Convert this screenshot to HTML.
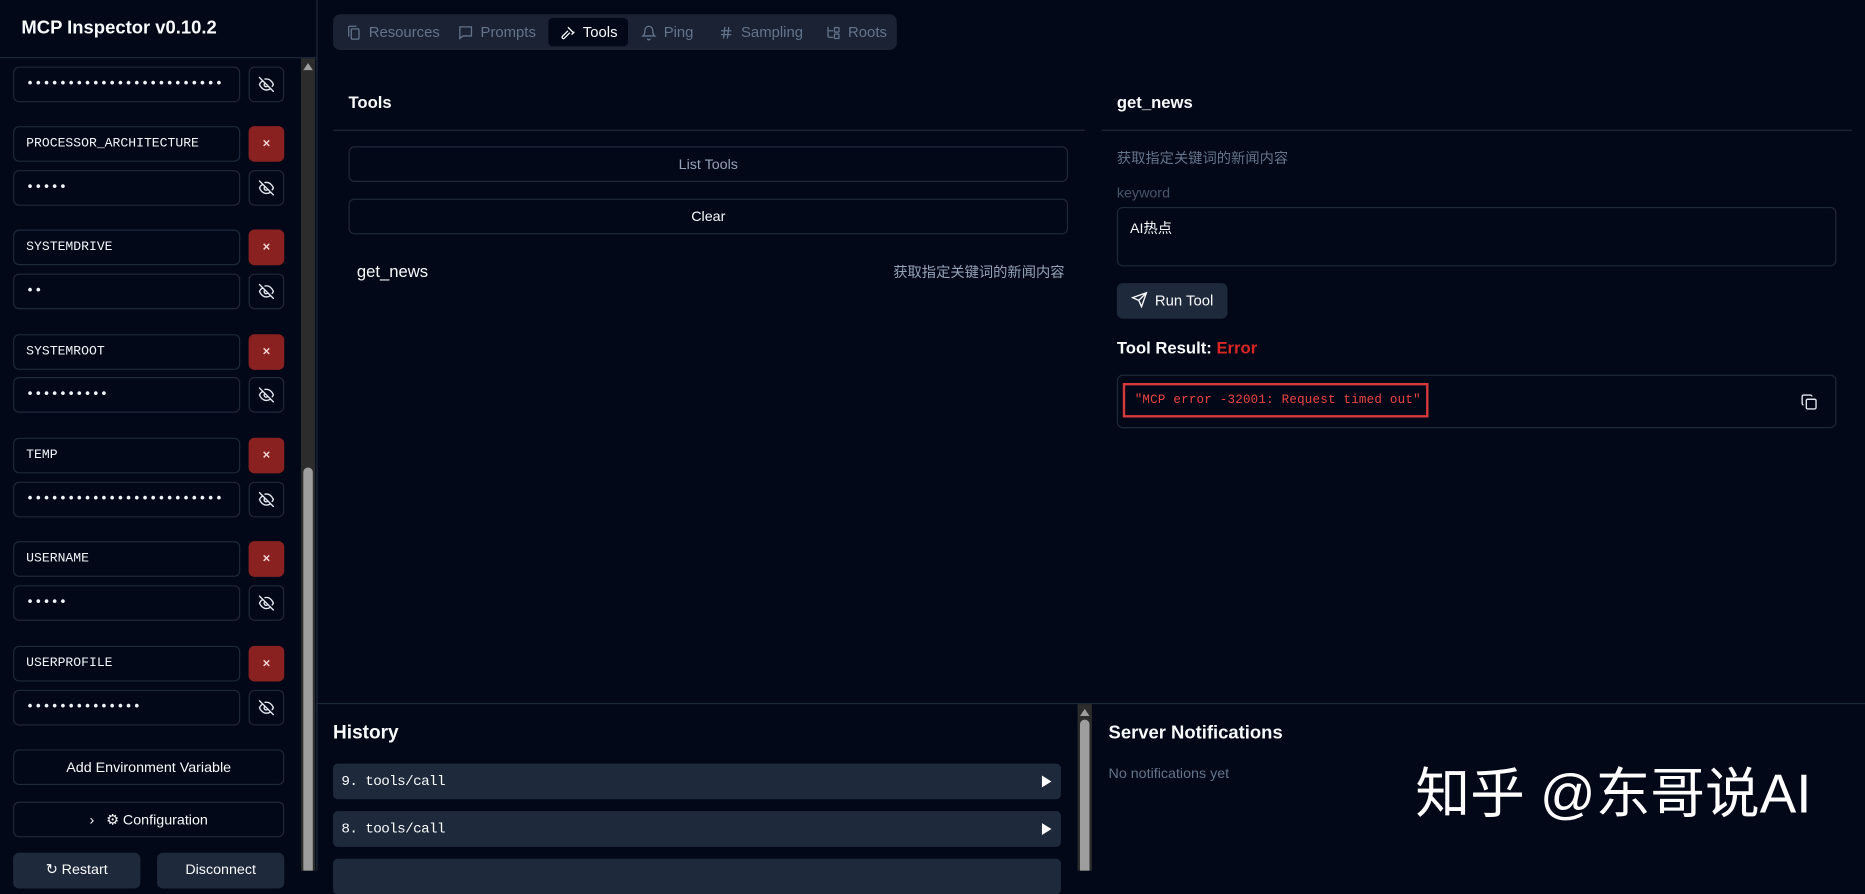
<!DOCTYPE html>
<html><head><meta charset="utf-8">
<style>
*{box-sizing:border-box;margin:0;padding:0}
html,body{width:1865px;height:871px;overflow:hidden;background:#020817}
#w{position:absolute;left:0;top:0;width:1568px;height:732px;transform:scale(1.18941);transform-origin:0 0;background:#020817;color:#f8fafc;font-family:"Liberation Sans","Noto Sans CJK SC",sans-serif;font-size:13px}
.a{position:absolute}
.inp{position:absolute;left:11px;width:191px;height:30px;border:1px solid #1e293b;border-radius:5px;font-family:"Liberation Mono",monospace;font-size:11px;color:#f1f5f9;padding-left:10px;line-height:29px;white-space:nowrap;overflow:hidden}
.dots{letter-spacing:0.3px;font-size:11px;font-weight:bold}
.eb{position:absolute;left:209px;width:30px;height:30px;border:1px solid #1e293b;border-radius:5px;display:flex;align-items:center;justify-content:center}
.xb{position:absolute;left:209px;width:30px;height:30px;background:#8a2121;border-radius:5px;color:#f1d5d5;font-size:11px;font-weight:bold;text-align:center;line-height:30px}
.btn{position:absolute;border:1px solid #1e293b;border-radius:5px;text-align:center;font-size:12px}
.tab{position:absolute;top:15px;height:24px;line-height:24px;font-size:12.5px;color:#64748b;display:flex;align-items:center;gap:6px}
.hr{position:absolute;height:1px;background:#1e293b}
.hist{position:absolute;left:280px;width:612px;height:30px;background:#1e293b;border-radius:4px;font-family:"Liberation Mono",monospace;font-size:12px;padding-left:7px;line-height:30px;letter-spacing:-0.5px}
.tri{position:absolute;right:8px;top:10px;width:0;height:0;border-left:8px solid #fff;border-top:5px solid transparent;border-bottom:5px solid transparent}
</style></head><body><div id="w">
<div class="a" style="left:266px;top:0;width:1px;height:732px;background:#1e293b"></div>
<div class="a" style="left:18px;top:15px;font-size:15.5px;font-weight:bold">MCP Inspector v0.10.2</div>
<div class="hr" style="left:0;top:48px;width:266px"></div>
<div class="a" style="left:253px;top:49px;width:12px;height:683px;background:#2c2c2c"></div>
<div class="a" style="left:255px;top:53px;width:0;height:0;border-left:4px solid transparent;border-right:4px solid transparent;border-bottom:6px solid #9e9e9e"></div>
<div class="a" style="left:255px;top:393px;width:8px;height:339px;background:#9e9e9e;border-radius:4px 4px 0 0"></div>

<div class="inp dots" style="top:56px">••••••••••••••••••••••••</div>
<div class="eb" style="top:56px"><svg width="14" height="14" viewBox="0 0 24 24" fill="none" stroke="#e2e8f0" stroke-width="2" stroke-linecap="round"><path d="M9.9 4.2A9 9 0 0 1 12 4c7 0 10 8 10 8a13 13 0 0 1-1.7 2.7M6.6 6.6A13.5 13.5 0 0 0 2 12s3 8 10 8a9.7 9.7 0 0 0 5.4-1.6M9.9 9.9a3 3 0 1 0 4.2 4.2M2 2l20 20"/></svg></div>

<div class="inp" style="top:106px">PROCESSOR_ARCHITECTURE</div><div class="xb" style="top:106px">×</div>
<div class="inp dots" style="top:143px">•••••</div>
<div class="eb" style="top:143px"><svg width="14" height="14" viewBox="0 0 24 24" fill="none" stroke="#e2e8f0" stroke-width="2" stroke-linecap="round"><path d="M9.9 4.2A9 9 0 0 1 12 4c7 0 10 8 10 8a13 13 0 0 1-1.7 2.7M6.6 6.6A13.5 13.5 0 0 0 2 12s3 8 10 8a9.7 9.7 0 0 0 5.4-1.6M9.9 9.9a3 3 0 1 0 4.2 4.2M2 2l20 20"/></svg></div>

<div class="inp" style="top:193px">SYSTEMDRIVE</div><div class="xb" style="top:193px">×</div>
<div class="inp dots" style="top:230px">••</div>
<div class="eb" style="top:230px"><svg width="14" height="14" viewBox="0 0 24 24" fill="none" stroke="#e2e8f0" stroke-width="2" stroke-linecap="round"><path d="M9.9 4.2A9 9 0 0 1 12 4c7 0 10 8 10 8a13 13 0 0 1-1.7 2.7M6.6 6.6A13.5 13.5 0 0 0 2 12s3 8 10 8a9.7 9.7 0 0 0 5.4-1.6M9.9 9.9a3 3 0 1 0 4.2 4.2M2 2l20 20"/></svg></div>

<div class="inp" style="top:281px">SYSTEMROOT</div><div class="xb" style="top:281px">×</div>
<div class="inp dots" style="top:317px">••••••••••</div>
<div class="eb" style="top:317px"><svg width="14" height="14" viewBox="0 0 24 24" fill="none" stroke="#e2e8f0" stroke-width="2" stroke-linecap="round"><path d="M9.9 4.2A9 9 0 0 1 12 4c7 0 10 8 10 8a13 13 0 0 1-1.7 2.7M6.6 6.6A13.5 13.5 0 0 0 2 12s3 8 10 8a9.7 9.7 0 0 0 5.4-1.6M9.9 9.9a3 3 0 1 0 4.2 4.2M2 2l20 20"/></svg></div>

<div class="inp" style="top:368px">TEMP</div><div class="xb" style="top:368px">×</div>
<div class="inp dots" style="top:405px">••••••••••••••••••••••••</div>
<div class="eb" style="top:405px"><svg width="14" height="14" viewBox="0 0 24 24" fill="none" stroke="#e2e8f0" stroke-width="2" stroke-linecap="round"><path d="M9.9 4.2A9 9 0 0 1 12 4c7 0 10 8 10 8a13 13 0 0 1-1.7 2.7M6.6 6.6A13.5 13.5 0 0 0 2 12s3 8 10 8a9.7 9.7 0 0 0 5.4-1.6M9.9 9.9a3 3 0 1 0 4.2 4.2M2 2l20 20"/></svg></div>

<div class="inp" style="top:455px">USERNAME</div><div class="xb" style="top:455px">×</div>
<div class="inp dots" style="top:492px">•••••</div>
<div class="eb" style="top:492px"><svg width="14" height="14" viewBox="0 0 24 24" fill="none" stroke="#e2e8f0" stroke-width="2" stroke-linecap="round"><path d="M9.9 4.2A9 9 0 0 1 12 4c7 0 10 8 10 8a13 13 0 0 1-1.7 2.7M6.6 6.6A13.5 13.5 0 0 0 2 12s3 8 10 8a9.7 9.7 0 0 0 5.4-1.6M9.9 9.9a3 3 0 1 0 4.2 4.2M2 2l20 20"/></svg></div>

<div class="inp" style="top:543px">USERPROFILE</div><div class="xb" style="top:543px">×</div>
<div class="inp dots" style="top:580px">••••••••••••••</div>
<div class="eb" style="top:580px"><svg width="14" height="14" viewBox="0 0 24 24" fill="none" stroke="#e2e8f0" stroke-width="2" stroke-linecap="round"><path d="M9.9 4.2A9 9 0 0 1 12 4c7 0 10 8 10 8a13 13 0 0 1-1.7 2.7M6.6 6.6A13.5 13.5 0 0 0 2 12s3 8 10 8a9.7 9.7 0 0 0 5.4-1.6M9.9 9.9a3 3 0 1 0 4.2 4.2M2 2l20 20"/></svg></div>

<div class="btn" style="left:11px;top:630px;width:228px;height:30px;line-height:28px">Add Environment Variable</div>
<div class="btn" style="left:11px;top:674px;width:228px;height:30px;line-height:28px">›&nbsp;&nbsp; ⚙ Configuration</div>
<div class="btn" style="left:11px;top:717px;width:107px;height:30px;line-height:28px;background:#1e293b;border:none">↻ Restart</div>
<div class="btn" style="left:132px;top:717px;width:107px;height:30px;line-height:28px;background:#1e293b;border:none">Disconnect</div>

<div class="a" style="left:280px;top:12px;width:474px;height:30px;background:#1a2234;border-radius:6px"></div>
<div class="a" style="left:461px;top:15px;width:67px;height:24px;background:#020817;border-radius:4px"></div>
<div class="tab" style="left:291px"><svg width="13" height="13" viewBox="0 0 24 24" fill="none" stroke="#64748b" stroke-width="2"><rect x="8" y="6" width="12" height="16" rx="2"/><path d="M4 18V4a2 2 0 0 1 2-2h10"/></svg>Resources</div>
<div class="tab" style="left:385px"><svg width="13" height="13" viewBox="0 0 24 24" fill="none" stroke="#64748b" stroke-width="2"><path d="M3 3h18v14H8l-5 4z"/></svg>Prompts</div>
<div class="tab" style="left:471px;color:#f8fafc"><svg width="13" height="13" viewBox="0 0 24 24" fill="none" stroke="#f8fafc" stroke-width="2"><path d="M15 12l-8.5 8.5a2.1 2.1 0 0 1-3-3L12 9M17.6 15L22 10.6M20 11.5l-8-8"/></svg>Tools</div>
<div class="tab" style="left:539px"><svg width="13" height="13" viewBox="0 0 24 24" fill="none" stroke="#64748b" stroke-width="2"><path d="M6 8a6 6 0 0 1 12 0c0 7 3 9 3 9H3s3-2 3-9M10 21a2 2 0 0 0 4 0"/></svg>Ping</div>
<div class="tab" style="left:604px"><svg width="13" height="13" viewBox="0 0 24 24" fill="none" stroke="#64748b" stroke-width="2"><path d="M4 9h16M4 15h16M10 3L8 21M16 3l-2 18"/></svg>Sampling</div>
<div class="tab" style="left:694px"><svg width="13" height="13" viewBox="0 0 24 24" fill="none" stroke="#64748b" stroke-width="2"><path d="M4 3v14a2 2 0 0 0 2 2h6M4 9h8"/><rect x="14" y="4" width="7" height="7" rx="1"/><rect x="14" y="14" width="7" height="7" rx="1"/></svg>Roots</div>

<div class="a" style="left:293px;top:78px;font-size:14px;font-weight:bold">Tools</div>
<div class="hr" style="left:280px;top:109px;width:632px"></div>
<div class="btn" style="left:293px;top:123px;width:605px;height:30px;line-height:28px;color:#94a3b8">List Tools</div>
<div class="btn" style="left:293px;top:167px;width:605px;height:30px;line-height:28px">Clear</div>
<div class="a" style="left:300px;top:220px;font-size:14px">get_news</div>
<div class="a" style="left:751px;top:220px;font-size:12px;color:#94a3b8">获取指定关键词的新闻内容</div>

<div class="a" style="left:939px;top:78px;font-size:14px;font-weight:bold">get_news</div>
<div class="hr" style="left:926px;top:109px;width:631px"></div>
<div class="a" style="left:939px;top:124px;font-size:12px;color:#64748b">获取指定关键词的新闻内容</div>
<div class="a" style="left:939px;top:155px;font-size:12px;color:#475569">keyword</div>
<div class="a" style="left:939px;top:174px;width:605px;height:50px;border:1px solid #1e293b;border-radius:5px;padding:8px 10px;font-size:12px">AI热点</div>
<div class="a" style="left:939px;top:238px;width:93px;height:30px;background:#1e293b;border-radius:5px;font-size:12.5px;line-height:30px;padding-left:12px"><svg width="14" height="14" viewBox="0 0 24 24" fill="none" stroke="#f8fafc" stroke-width="2" style="vertical-align:-2px;margin-right:6px"><path d="M22 2L11 13M22 2l-7 20-4-9-9-4z"/></svg>Run Tool</div>
<div class="a" style="left:939px;top:284px;font-size:14px;font-weight:bold">Tool Result: <span style="color:#dc2626">Error</span></div>
<div class="a" style="left:939px;top:315px;width:605px;height:45px;border:1px solid #1e293b;border-radius:5px"></div>
<div class="a" style="left:944px;top:322px;width:257px;height:29px;border:2px solid #d63a3a"></div>
<div class="a" style="left:954px;top:331px;font-family:'Liberation Mono',monospace;font-size:10.5px;color:#ef4444;letter-spacing:0.2px">"MCP error -32001: Request timed out"</div>
<svg class="a" style="left:1514px;top:331px" width="14" height="14" viewBox="0 0 24 24" fill="none" stroke="#e2e8f0" stroke-width="2"><rect x="8" y="8" width="14" height="14" rx="2"/><path d="M4 16c-1 0-2-1-2-2V4c0-1 1-2 2-2h10c1 0 2 1 2 2"/></svg>

<div class="hr" style="left:267px;top:591px;width:1301px"></div>
<div class="a" style="left:906px;top:592px;width:12px;height:140px;background:#2c2c2c"></div>
<div class="a" style="left:908px;top:596px;width:0;height:0;border-left:4px solid transparent;border-right:4px solid transparent;border-bottom:6px solid #9e9e9e"></div>
<div class="a" style="left:908px;top:605px;width:8px;height:127px;background:#9e9e9e;border-radius:4px 4px 0 0"></div>
<div class="a" style="left:280px;top:608px;font-size:16px;font-weight:bold">History</div>
<div class="hist" style="top:642px">9. tools/call<div class="tri"></div></div>
<div class="hist" style="top:682px">8. tools/call<div class="tri"></div></div>
<div class="hist" style="top:722px"></div>
<div class="a" style="left:932px;top:608px;font-size:15.5px;font-weight:bold">Server Notifications</div>
<div class="a" style="left:932px;top:643px;font-size:12px;color:#64748b">No notifications yet</div>
<div class="a" style="left:1190px;top:640px;font-size:46px;color:#fff;font-family:'Liberation Sans','Noto Sans CJK SC',sans-serif;white-space:nowrap;line-height:54px">知乎 @东哥说AI</div>
</div></body></html>
